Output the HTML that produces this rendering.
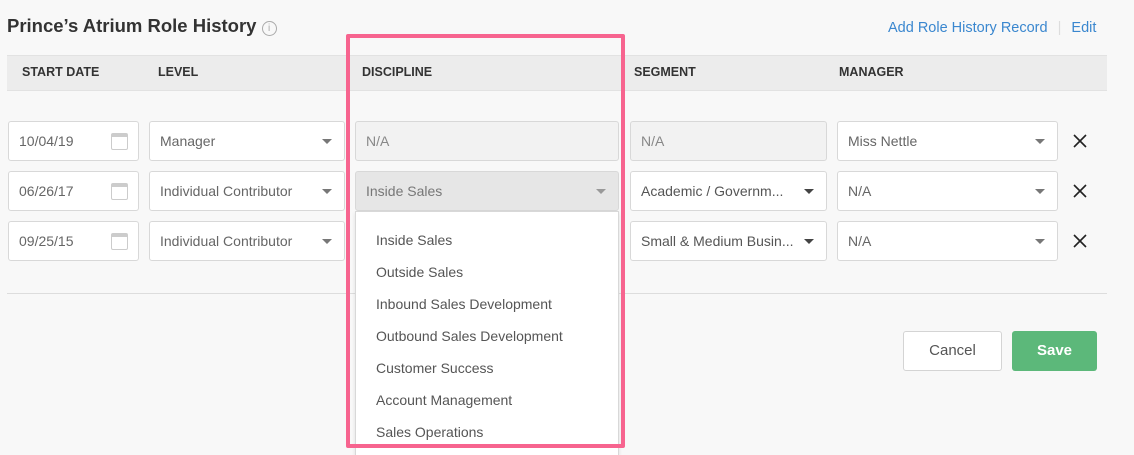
<!DOCTYPE html>
<html style="width:1134px;height:455px;overflow:hidden"><head><style>
*{box-sizing:border-box;margin:0;padding:0}
body{width:1134px;height:455px;background:#f8f8f8;font-family:"Liberation Sans",sans-serif;position:relative;overflow:hidden;color:#555}
.a{position:absolute}
.title{left:7px;top:15px;font-size:18.5px;font-weight:bold;color:#333}
.hdr{left:7px;top:55px;width:1100px;height:36px;background:#ececec;border-top:1px solid #e2e2e2;border-bottom:1px solid #e2e2e2}
.h{top:65px;font-size:12.5px;font-weight:bold;color:#333}
.in{height:40px;border:1px solid #d8d8d8;border-radius:3px;background:#fff;font-size:14px;color:#666;padding-left:10px;line-height:38px}
.dis{background:#f2f2f2;color:#888}
.caret{position:absolute;right:12px;top:17px;width:0;height:0;border-left:5px solid transparent;border-right:5px solid transparent;border-top:5px solid #777}
.cal{position:absolute;right:10px;top:11px;width:17px;height:17px;border:1.5px solid #ccc;border-top-width:4px;border-radius:2px}
.x{left:1073px;width:14px;height:14px}
.item{left:376px;font-size:14px;color:#555}
</style></head><body>
<div class="a title">Prince’s Atrium Role History <span style="display:inline-block;width:15px;height:15px;border:1px solid #aaa;border-radius:50%;font-size:10px;color:#aaa;text-align:center;line-height:13px;font-weight:normal;vertical-align:1px">i</span></div>
<div class="a" style="left:888px;top:20px;font-size:14.5px;color:#3a87cf">Add Role History Record <span style="color:#ddd;margin:0 6px">|</span> Edit</div>
<div class="a hdr"></div>
<div class="a h" style="left:22px">START DATE</div>
<div class="a h" style="left:158px">LEVEL</div>
<div class="a h" style="left:362px">DISCIPLINE</div>
<div class="a h" style="left:634px">SEGMENT</div>
<div class="a h" style="left:839px">MANAGER</div>

<div class="a in" style="left:8px;top:121px;width:131px">10/04/19<div class="cal"></div></div>
<div class="a in" style="left:8px;top:171px;width:131px">06/26/17<div class="cal"></div></div>
<div class="a in" style="left:8px;top:221px;width:131px">09/25/15<div class="cal"></div></div>

<div class="a in" style="left:149px;top:121px;width:196px">Manager<div class="caret"></div></div>
<div class="a in" style="left:149px;top:171px;width:196px">Individual Contributor<div class="caret"></div></div>
<div class="a in" style="left:149px;top:221px;width:196px">Individual Contributor<div class="caret"></div></div>

<div class="a in dis" style="left:355px;top:121px;width:264px">N/A</div>
<div class="a in" style="left:355px;top:171px;width:264px;background:#e6e6e6;color:#777">Inside Sales<div class="caret" style="border-top-color:#999"></div></div>

<div class="a in dis" style="left:630px;top:121px;width:197px">N/A</div>
<div class="a in" style="left:630px;top:171px;width:197px;color:#555">Academic / Governm...<div class="caret" style="border-top-color:#444"></div></div>
<div class="a in" style="left:630px;top:221px;width:197px;color:#555">Small &amp; Medium Busin...<div class="caret" style="border-top-color:#444"></div></div>

<div class="a in" style="left:837px;top:121px;width:221px">Miss Nettle<div class="caret"></div></div>
<div class="a in" style="left:837px;top:171px;width:221px">N/A<div class="caret"></div></div>
<div class="a in" style="left:837px;top:221px;width:221px">N/A<div class="caret"></div></div>
<svg class="a x" style="top:134px" viewBox="0 0 14 14"><path d="M1 1L13 13M13 1L1 13" stroke="#222" stroke-width="1.6"/></svg>
<svg class="a x" style="top:184px" viewBox="0 0 14 14"><path d="M1 1L13 13M13 1L1 13" stroke="#222" stroke-width="1.6"/></svg>
<svg class="a x" style="top:234px" viewBox="0 0 14 14"><path d="M1 1L13 13M13 1L1 13" stroke="#222" stroke-width="1.6"/></svg>

<div class="a" style="left:7px;top:293px;width:1100px;height:1px;background:#ddd"></div>
<div class="a" style="left:903px;top:331px;width:99px;height:40px;border:1px solid #d4d4d4;border-radius:3px;background:#fff;font-size:15px;color:#555;text-align:center;line-height:38px">Cancel</div>
<div class="a" style="left:1012px;top:331px;width:85px;height:40px;border-radius:3px;background:#5cb87a;font-size:15px;font-weight:bold;color:#fff;text-align:center;line-height:40px">Save</div>

<div class="a" style="left:355px;top:211px;width:264px;height:244px;background:#fff;border:1px solid #d8d8d8;border-bottom:none;box-shadow:0 2px 4px rgba(0,0,0,.1)"></div>
<div class="a item" style="top:232px">Inside Sales</div>
<div class="a item" style="top:264px">Outside Sales</div>
<div class="a item" style="top:296px">Inbound Sales Development</div>
<div class="a item" style="top:328px">Outbound Sales Development</div>
<div class="a item" style="top:360px">Customer Success</div>
<div class="a item" style="top:392px">Account Management</div>
<div class="a item" style="top:424px">Sales Operations</div>

<div class="a" style="left:346px;top:34px;width:279px;height:414px;border:4px solid #f7648f;border-radius:2px"></div>
</body></html>
